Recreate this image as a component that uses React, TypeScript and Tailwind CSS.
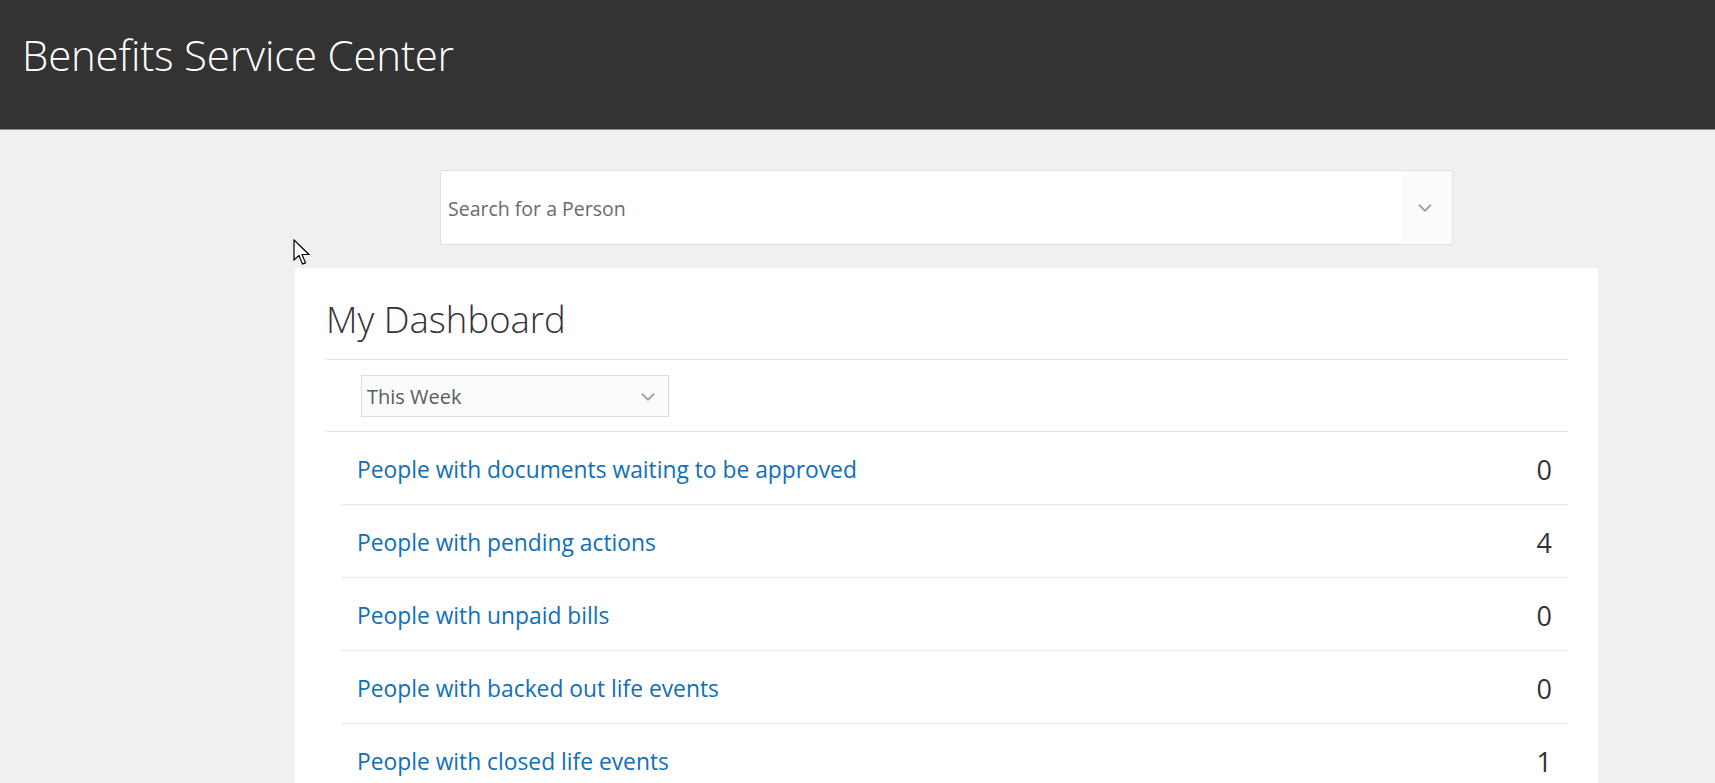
import { ChevronDown } from 'lucide-react';

const rows = [
  { label: 'People with documents waiting to be approved', count: 0 },
  { label: 'People with pending actions', count: 4 },
  { label: 'People with unpaid bills', count: 0 },
  { label: 'People with backed out life events', count: 0 },
  { label: 'People with closed life events', count: 1 },
];

function Cursor() {
  return (
    <svg
      className="absolute left-[293px] top-[239px]"
      width="19"
      height="27"
      viewBox="0 0 19 27"
    >
      <path
        d="M1 1 L1 21 L6 16.5 L9.5 25 L12.5 23.8 L9 15.5 L16 15.5 Z"
        fill="#ffffff"
        stroke="#000000"
        strokeWidth="1.2"
        strokeLinejoin="miter"
      />
    </svg>
  );
}

export default function App() {
  return (
    <div
      className="relative min-h-[783px] bg-[#f0f0f0] overflow-hidden"
      style={{ fontFamily: '"Segoe UI", "Open Sans", sans-serif' }}
    >
      <header className="h-[130px] bg-[#333333] border-b border-[#8a8a8a] flex items-start">
        <h1 className="ml-[22px] mt-[30px] text-[42px] leading-[50px] font-light text-white tracking-[-0.2px]">
          Benefits Service Center
        </h1>
      </header>

      <div className="ml-[440px] mt-[40px] w-[1013px] h-[75px] bg-white border border-[#e0e0e0] rounded-[2px] flex items-stretch">
        <div className="flex-1 flex items-center pl-[7px] pt-[2px] text-[19.5px] text-[#6b6b6b]">
          Search for a Person
        </div>
        <div className="w-[50px] bg-[#fafbfc] flex items-center justify-center pr-[4px]">
          <ChevronDown size={22} strokeWidth={2} className="text-[#a3a3a3]" />
        </div>
      </div>

      <section className="ml-[295px] mt-[23px] w-[1303px] min-h-[515px] bg-white pl-[31px] pr-[30px]">
        <div className="pt-[29px] pb-[17px] border-b border-[#dde1e6]">
          <h2 className="text-[36.5px] leading-[45px] font-light text-[#333333]">
            My Dashboard
          </h2>
        </div>
        <div className="pt-[15px] pb-[14px] border-b border-[#dde1e6]">
          <div className="ml-[35px] w-[308px] h-[42px] bg-[#fafbfc] border border-[#dcdcdc] flex items-center justify-between pl-[5px] pr-[9px] pt-[2px]">
            <span className="text-[20px] text-[#5c5c5c]">This Week</span>
            <ChevronDown size={22} strokeWidth={2} className="text-[#a3a3a3]" />
          </div>
        </div>
        <ul className="ml-[15px]">
          {rows.map((row) => (
            <li
              key={row.label}
              className="h-[73px] border-b border-[#e8eaed] flex items-center justify-between px-[16px] pt-[5px]"
            >
              <a href="#" className="text-[22.8px] text-[#0f6fb8]">
                {row.label}
              </a>
              <span className="text-[27px] text-[#333333]">{row.count}</span>
            </li>
          ))}
        </ul>
      </section>

      <Cursor />
    </div>
  );
}
